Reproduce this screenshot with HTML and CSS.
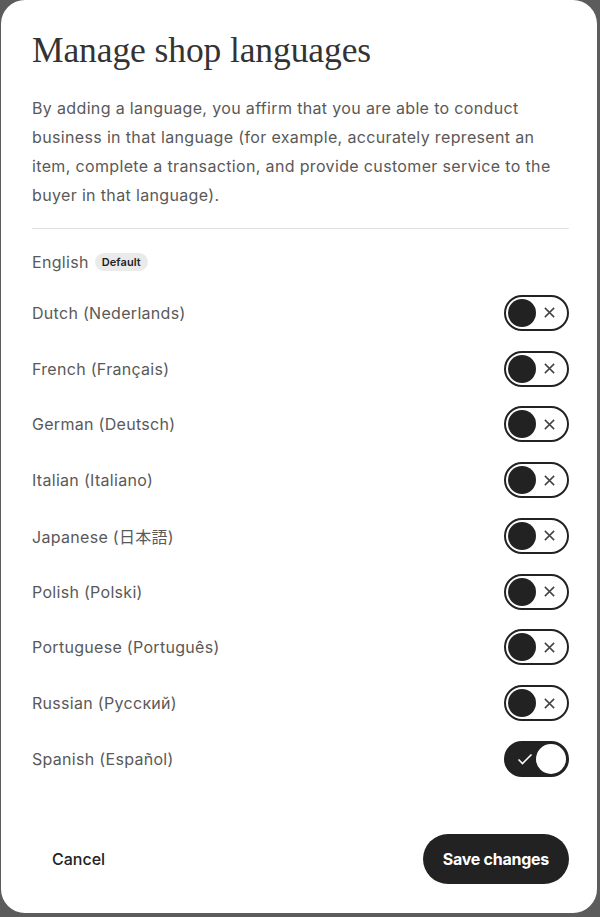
FILE: index.html
```html
<!DOCTYPE html>
<html lang="en">
<head>
    <meta charset="UTF-8">
    <meta name="viewport" content="width=device-width, initial-scale=1.0">
    <title>Manage shop languages</title>
    <link rel="stylesheet" href="styles.css">
</head>
<body>

    <div class="modal">
        <h1>Manage shop languages</h1>
        <p class="intro">By adding a language, you affirm that you are able to conduct business in that language (for example, accurately represent an item, complete a transaction, and provide customer service to the buyer in that language).</p>

        <hr class="divider">

        <ul class="lang-list">
            <li class="lang-row lang-default">
                <span class="lang-name">English</span>
                <span class="badge">Default</span>
            </li>
            <li class="lang-row">
                <span class="lang-name">Dutch (Nederlands)</span>
                <button class="toggle" type="button"></button>
            </li>
            <li class="lang-row">
                <span class="lang-name">French (Français)</span>
                <button class="toggle" type="button"></button>
            </li>
            <li class="lang-row">
                <span class="lang-name">German (Deutsch)</span>
                <button class="toggle" type="button"></button>
            </li>
            <li class="lang-row">
                <span class="lang-name">Italian (Italiano)</span>
                <button class="toggle" type="button"></button>
            </li>
            <li class="lang-row">
                <span class="lang-name">Japanese (日本語)</span>
                <button class="toggle" type="button"></button>
            </li>
            <li class="lang-row">
                <span class="lang-name">Polish (Polski)</span>
                <button class="toggle" type="button"></button>
            </li>
            <li class="lang-row">
                <span class="lang-name">Portuguese (Português)</span>
                <button class="toggle" type="button"></button>
            </li>
            <li class="lang-row">
                <span class="lang-name">Russian (Русский)</span>
                <button class="toggle" type="button"></button>
            </li>
            <li class="lang-row">
                <span class="lang-name">Spanish (Español)</span>
                <button class="toggle on" type="button"></button>
            </li>
        </ul>

        <div class="modal-footer">
            <button class="btn-cancel" type="button">Cancel</button>
            <button class="btn-save" type="button">Save changes</button>
        </div>
    </div>

    <script>
        // icons inside the switches: a cross when off, a tick when on
        const crossIcon = '<svg class="icon icon-x" viewBox="0 0 14 14"><path d="M2 2 L12 12 M12 2 L2 12"/></svg>';
        const tickIcon = '<svg class="icon icon-tick" viewBox="0 0 16 14"><path d="M1.5 7.5 L5.5 11.5 L14.5 2.5"/></svg>';

        function drawToggle(btn) {
            const on = btn.classList.contains('on');
            btn.innerHTML = (on ? tickIcon : '') + '<span class="knob"></span>' + (on ? '' : crossIcon);
            btn.setAttribute('aria-pressed', on);
        }

        document.querySelectorAll('.toggle').forEach(btn => {
            drawToggle(btn);
            btn.addEventListener('click', function() {
                btn.classList.toggle('on');
                drawToggle(btn);
            });
        });
    </script>

</body>
</html>
```

FILE: styles.css
```css
body {
    margin: 0;
    padding: 0;
    background-color: #5c5c5c;
    font-family: Inter, "Noto Sans", "Noto Sans CJK JP", sans-serif;
}
.modal {
    box-sizing: border-box;
    width: 596px;
    height: 913px;
    margin-left: 1px;
    background-color: white;
    border-radius: 24px;
    padding: 0 28px 0 31px;
    display: flex;
    flex-direction: column;
}
h1 {
    margin: 30px 0 0 0;
    font-family: "Liberation Serif", "DejaVu Serif", serif;
    font-weight: normal;
    font-size: 35.5px;
    line-height: 40px;
    color: #333;
    letter-spacing: -0.1px;
}
.intro {
    margin: 24px 0 0 0;
    font-size: 16px;
    line-height: 29px;
    color: #595959;
    letter-spacing: 0.35px;
}
.divider {
    border: none;
    border-top: 1px solid #e1e1e1;
    margin: 18px 0 0 0;
    width: 537px;
}
.lang-list {
    list-style: none;
    margin: 20px 0 0 0;
    padding: 0;
    display: flex;
    flex-direction: column;
    gap: 19.75px;
}
.lang-row {
    display: flex;
    align-items: center;
    justify-content: space-between;
    height: 36px;
    font-size: 16px;
    color: #595959;
    letter-spacing: 0.3px;
}
.lang-row.lang-default {
    justify-content: flex-start;
    gap: 6px;
    height: 26px;
}
.badge {
    background-color: #eaeaea;
    color: #222;
    font-size: 11px;
    font-weight: 600;
    letter-spacing: 0.1px;
    border-radius: 9px;
    padding: 0 7px;
    line-height: 18px;
}
.toggle {
    box-sizing: border-box;
    width: 65px;
    height: 36px;
    border: 2px solid #222;
    border-radius: 18px;
    background-color: white;
    padding: 0 2px;
    display: flex;
    align-items: center;
    justify-content: space-between;
    cursor: pointer;
}
.knob {
    width: 28px;
    height: 28px;
    border-radius: 50%;
    background-color: #222;
}
.icon {
    fill: none;
    stroke-width: 1.6;
}
.icon-x {
    width: 13px;
    height: 13px;
    stroke: #444;
    margin-right: 9px;
}
.toggle.on {
    background-color: #222;
}
.toggle.on .knob {
    background-color: white;
    width: 30px;
    height: 30px;
    margin-right: -1px;
}
.icon-tick {
    width: 16px;
    height: 14px;
    stroke: white;
    margin-left: 9px;
}
.modal-footer {
    margin-top: auto;
    margin-bottom: 29px;
    display: flex;
    justify-content: space-between;
    align-items: center;
}
.btn-cancel {
    background: none;
    border: none;
    font-family: inherit;
    font-size: 16px;
    font-weight: 500;
    color: #222;
    padding: 0 0 0 20px;
    cursor: pointer;
}
.btn-save {
    height: 50px;
    padding: 0 20px;
    background-color: #222;
    color: white;
    border: none;
    border-radius: 25px;
    font-family: inherit;
    font-size: 16px;
    font-weight: 700;
    letter-spacing: -0.25px;
    cursor: pointer;
}
```
